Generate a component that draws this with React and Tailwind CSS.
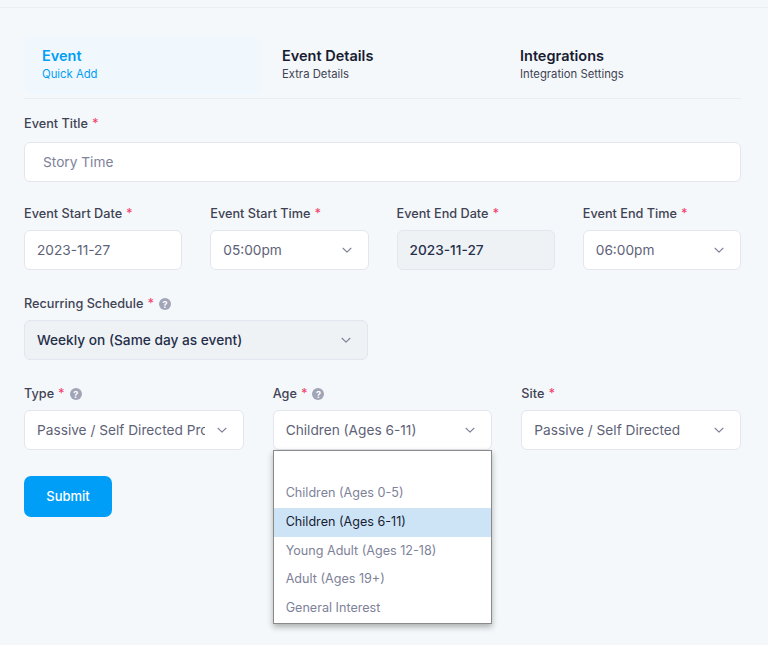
import React from "react";

const Chevron = () => (
  <svg width="14" height="14" viewBox="0 0 16 16" fill="none" className="shrink-0">
    <path d="M3.5 6l4.5 4.5L12.5 6" stroke="#7e8299" strokeWidth="1.3" strokeLinecap="round" strokeLinejoin="round" />
  </svg>
);

const Help = () => (
  <span className="inline-flex items-center justify-center w-[12px] h-[12px] rounded-full bg-[#a1a5b7] text-white text-[9px] font-bold leading-none ml-[5px]">?</span>
);

const Label = ({ children, help, mb = "mb-[6px]" }) => (
  <div className={`flex items-center text-[12.7px] font-medium text-[#3f4254] h-[20px] ${mb}`}>
    <span>{children}</span>
    <span className="text-[#f1416c] ml-[4px]">*</span>
    {help && <Help />}
  </div>
);

const Select = ({ value, gray, dark, open }) => (
  <div
    className={`h-[40px] rounded-[6px] border flex items-center justify-between gap-[10px] pl-[12px] pr-[14px] text-[13.7px] ${
      gray ? "bg-[#eff2f5] border-[#e4e6ef]" : "bg-white border-[#e4e6ef]"
    } ${open ? "border-[#b5b5c3]" : ""} ${dark ? "text-[#252f4a] font-medium" : "text-[#5e6278]"}`}
  >
    <span className="whitespace-nowrap overflow-hidden">{value}</span>
    <Chevron />
  </div>
);

export default function App() {
  const opts = ["", "Children (Ages 0-5)", "Children (Ages 6-11)", "Young Adult (Ages 12-18)", "Adult (Ages 19+)", "General Interest"];
  return (
    <div className="min-h-[645px] bg-[#f5f8fa] font-['Inter',sans-serif] pt-[7px]">
      <div className="border-t border-[#eaedf1] pl-[24px] pr-[27px] pt-[28px]">
        {/* Tabs */}
        <div className="flex border-b border-[#eaedf1] pb-[4px]">
          <div className="w-[238px] h-[58px] rounded-[8px] bg-[#f1f8fd] pl-[18px] pb-[2px] flex flex-col justify-center">
            <div className="text-[14.5px] font-semibold text-[#009ef7] leading-[20px]">Event</div>
            <div className="text-[11.3px] text-[#009ef7] leading-[16px]">Quick Add</div>
          </div>
          <div className="w-[238px] h-[58px] pl-[20px] pb-[2px] flex flex-col justify-center">
            <div className="text-[14.5px] font-semibold text-[#181c32] leading-[20px]">Event Details</div>
            <div className="text-[11.3px] text-[#3f4254] leading-[16px]">Extra Details</div>
          </div>
          <div className="w-[238px] h-[58px] pl-[20px] pb-[2px] flex flex-col justify-center">
            <div className="text-[14.5px] font-semibold text-[#181c32] leading-[20px]">Integrations</div>
            <div className="text-[11.3px] text-[#3f4254] leading-[16px]">Integration Settings</div>
          </div>
        </div>

        {/* Event title */}
        <div className="mt-[15px]">
          <Label mb="mb-[8px]">Event Title</Label>
          <div className="h-[40px] rounded-[6px] bg-white border border-[#e4e6ef] flex items-center pl-[18px] text-[13.7px] text-[#7e8299]">
            Story Time
          </div>
        </div>

        {/* Dates */}
        <div className="grid grid-cols-4 gap-x-[28px] mt-[22px]">
          <div>
            <Label>Event Start Date</Label>
            <div className="h-[40px] rounded-[6px] bg-white border border-[#e4e6ef] flex items-center pl-[12px] text-[13.7px] text-[#5e6278]">2023-11-27</div>
          </div>
          <div>
            <Label>Event Start Time</Label>
            <Select value="05:00pm" />
          </div>
          <div>
            <Label>Event End Date</Label>
            <div className="h-[40px] rounded-[6px] bg-[#eff2f5] border border-[#e4e6ef] flex items-center pl-[12px] text-[13.7px] font-medium text-[#252f4a]">2023-11-27</div>
          </div>
          <div>
            <Label>Event End Time</Label>
            <Select value="06:00pm" />
          </div>
        </div>

        {/* Recurring */}
        <div className="mt-[24px] w-[344px]">
          <Label help>Recurring Schedule</Label>
          <Select value="Weekly on (Same day as event)" gray dark />
        </div>

        {/* Type / Age / Site */}
        <div className="grid grid-cols-3 gap-x-[29px] mt-[24px]">
          <div>
            <Label help>Type</Label>
            <Select value="Passive / Self Directed Programs" />
          </div>
          <div className="relative">
            <Label help>Age</Label>
            <Select value="Children (Ages 6-11)" open />
            <div className="absolute left-0 right-0 top-[66px] bg-white border border-[#8a8a8a] shadow-[0_3px_6px_rgba(0,0,0,0.3)] z-10">
              {opts.map((o, i) => (
                <div
                  key={i}
                  className={`h-[28.6px] flex items-center pl-[12px] text-[12.6px] ${
                    i === 2 ? "bg-[#cde4f7] text-[#181c32]" : "text-[#7e8299]"
                  }`}
                >
                  {o}
                </div>
              ))}
            </div>
          </div>
          <div>
            <Label>Site</Label>
            <Select value="Passive / Self Directed" />
          </div>
        </div>

        <button className="mt-[26px] w-[88px] h-[41px] rounded-[7px] bg-[#009ef7] text-white text-[13px] font-medium">
          Submit
        </button>
      </div>
    </div>
  );
}
